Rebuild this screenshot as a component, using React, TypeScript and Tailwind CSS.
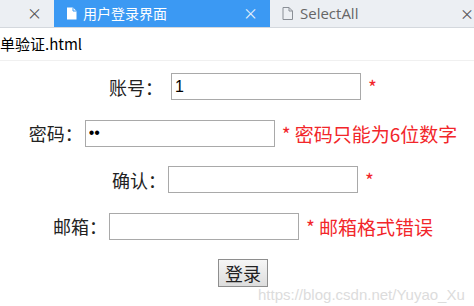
import React from "react";

const DocIcon = ({ filled }: { filled: boolean }) => (
  <svg width="11" height="13" viewBox="0 0 11 13">
    {filled ? (
      <path d="M1 0.5 H7 L10.5 4 V12.5 H1 Z" fill="#ffffff" />
    ) : (
      <path d="M1 0.5 H7 L10.5 4 V12.5 H1 Z" fill="none" stroke="#8a8f96" strokeWidth="1" />
    )}
    <path d="M7 0.5 V4 H10.5" fill="none" stroke={filled ? "#3b99f3" : "#8a8f96"} strokeWidth="1" />
  </svg>
);

const cjk = "font-['Microsoft_YaHei','Noto_Sans_CJK_SC',sans-serif]";

function Row({ label, value, error, wide }: { label: string; value?: string; error?: string; wide?: boolean }) {
  return (
    <div className="flex h-[27px] items-center justify-center pl-[12px]">
      <span className={`text-[18px] leading-none text-[#222] whitespace-nowrap ${wide ? "mr-[8px]" : "mr-[2px]"}`}>{label}</span>
      <input
        readOnly
        value={value ?? ""}
        className="h-[27px] w-[190px] border border-[#a9a9a9] bg-white px-[3px] text-[16px] text-black outline-none font-['Liberation_Sans',sans-serif]"
      />
      <span className="ml-[7px] text-[19px] leading-none text-[#f2262a] whitespace-nowrap">
        {error ? `* ${error}` : "*"}
      </span>
    </div>
  );
}

export default function App() {
  return (
    <div className={`relative h-[306px] w-[474px] overflow-hidden bg-white ${cjk}`}>
      <div className="flex h-[28px] border-b border-[#d4d8dd] bg-[#eceff3]">
        <div className="flex w-[54px] items-center justify-end pr-[12px] text-[15px] text-[#555]">×</div>
        <div className="flex w-[216px] items-center bg-[#3b99f3] pl-[12px] pr-[12px] text-white">
          <DocIcon filled />
          <span className="ml-[6px] text-[14px]">用户登录界面</span>
          <span className="ml-auto text-[15px] text-[#e6f0fb]">×</span>
        </div>
        <div className="flex flex-1 items-center pl-[12px] text-[#666]">
          <DocIcon filled={false} />
          <span className="ml-[7px] text-[15px] font-['Open_Sans','Noto_Sans',sans-serif]">SelectAll</span>
          <span className="ml-auto text-[14px] text-[#555]">×</span>
        </div>
      </div>
      <div className="flex h-[33px] items-center border-b border-[#f0f0f0] text-[15px] text-black">
        单验证.html
      </div>
      <div className="flex flex-col gap-[19.5px] pt-[12px]">
        <Row label="账号：" value="1" wide />
        <Row label="密码：" value="••" error="密码只能为6位数字" />
        <Row label="确认：" />
        <Row label="邮箱：" error="邮箱格式错误" />
        <div className="flex justify-center pl-[12px]">
          <button className="h-[28px] w-[50px] border border-[#8e8e8e] bg-gradient-to-b from-[#f6f6f6] to-[#dddddd] text-[18px] leading-none text-[#222]">
            登录
          </button>
        </div>
      </div>
      <div className="absolute left-[258px] top-[284px] text-[15px] text-[#dcdcdc] font-['Liberation_Sans',sans-serif]">
        https://blog.csdn.net/Yuyao_Xu
      </div>
    </div>
  );
}
